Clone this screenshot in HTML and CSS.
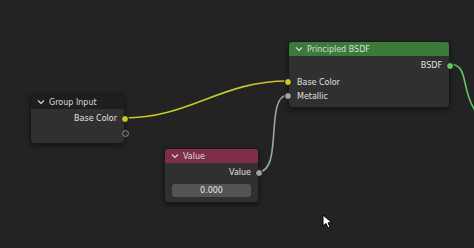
FILE: index.html
```html
<!DOCTYPE html>
<html lang="en">
<head>
    <meta charset="UTF-8">
    <title>Node Editor</title>
    <link rel="stylesheet" href="styles.css">
</head>
<body>
    <div class="canvas">
        <!-- Wires -->
        <svg class="wires" width="474" height="248" viewBox="0 0 474 248">
            <path d="M124 118 C 190 118, 220 81, 288 81" stroke="#c8c82a" />
            <path d="M258 172 C 284 172, 264 95, 288 95" stroke="#a3a3a3" />
            <path d="M449 64 C 470 64, 460 90, 476 112" stroke="#64c864" />
        </svg>

        <!-- Group Input -->
        <div class="node group-input">
            <div class="node-header">
                <svg class="chev" width="8" height="6" viewBox="0 0 8 6"><path d="M1 1.5 L4 4.5 L7 1.5" /></svg>
                Group Input
            </div>
            <div class="node-body">
                <div class="row out">Base Color<span class="socket yellow"></span></div>
                <div class="row out"><span class="socket empty"></span></div>
            </div>
        </div>

        <!-- Principled BSDF -->
        <div class="node bsdf">
            <div class="node-header">
                <svg class="chev" width="8" height="6" viewBox="0 0 8 6"><path d="M1 1.5 L4 4.5 L7 1.5" /></svg>
                Principled BSDF
            </div>
            <div class="node-body">
                <div class="row out">BSDF<span class="socket green"></span></div>
                <div class="row in spaced"><span class="socket yellow"></span>Base Color</div>
                <div class="row in"><span class="socket grey"></span>Metallic</div>
            </div>
        </div>

        <!-- Value -->
        <div class="node value">
            <div class="node-header">
                <svg class="chev" width="8" height="6" viewBox="0 0 8 6"><path d="M1 1.5 L4 4.5 L7 1.5" /></svg>
                Value
            </div>
            <div class="node-body">
                <div class="row out">Value<span class="socket grey"></span></div>
                <div class="field">0.000</div>
            </div>
        </div>

        <!-- Cursor -->
        <svg class="cursor" width="12" height="16" viewBox="0 0 12 16">
            <path d="M1 1 L1 12 L4 9.5 L6 14 L8 13 L6 8.8 L10 8.8 Z" fill="#fff" stroke="#000" stroke-width="1" />
        </svg>
    </div>
</body>
</html>
```

FILE: styles.css
```css
/* Reset */
body {
    margin: 0;
    padding: 0;
    background-color: #232323;
    font-family: "DejaVu Sans", Arial, sans-serif;
    font-size: 8px;
    color: #e0e0e0;
}

.canvas {
    position: relative;
    width: 474px;
    height: 248px;
    overflow: hidden;
    background-color: #232323;
}

.wires {
    position: absolute;
    left: 0;
    top: 0;
}

.wires path {
    fill: none;
    stroke-width: 1.6;
}

/* Nodes */
.node {
    position: absolute;
    background-color: #303030;
    border: 1px solid #181818;
    border-radius: 4px;
    box-shadow: 0 2px 5px rgba(0, 0, 0, 0.45);
}

.node-header {
    display: flex;
    align-items: center;
    gap: 4px;
    height: 14px;
    padding-left: 6px;
    border-radius: 3px 3px 0 0;
    background-color: #1e1e1e;
    color: #dcdcdc;
}

.chev path {
    fill: none;
    stroke: #d8d8d8;
    stroke-width: 1.2;
}

.node-body {
    display: flex;
    flex-direction: column;
    padding: 2px 0 6px;
}

.row {
    position: relative;
    display: flex;
    align-items: center;
    height: 15px;
}

.row.out {
    justify-content: flex-end;
    padding-right: 7px;
}

.row.in {
    padding-left: 8px;
    height: 14px;
}

.row.spaced {
    margin-top: 2px;
}

/* Sockets */
.socket {
    position: absolute;
    top: 50%;
    width: 6px;
    height: 6px;
    margin-top: -4px;
    border-radius: 50%;
    border: 1px solid #151515;
}

.row.out .socket {
    right: -5px;
}

.row.in .socket {
    left: -5px;
}

.socket.yellow {
    background-color: #c8c82a;
}

.socket.grey {
    background-color: #a3a3a3;
}

.socket.green {
    background-color: #64c864;
}

.socket.empty {
    background-color: #2b2b2b;
    border: 1px solid #8a8a8a;
    width: 5px;
    height: 5px;
}

/* Positions on the node canvas */
.group-input {
    left: 30px;
    top: 94px;
    width: 93px;
    height: 48px;
}

.bsdf {
    left: 288px;
    top: 41px;
    width: 160px;
    height: 65px;
}

.bsdf .node-header {
    background-color: #3b7a3b;
}

.value {
    left: 164px;
    top: 148px;
    width: 93px;
    height: 53px;
}

.value .node-header {
    background-color: #7e2f47;
}

.field {
    margin: 4px 7px 0;
    height: 13px;
    border-radius: 3px;
    background-color: #545454;
    text-align: center;
    line-height: 13px;
    color: #e6e6e6;
}

.cursor {
    position: absolute;
    left: 322px;
    top: 214px;
}
```
